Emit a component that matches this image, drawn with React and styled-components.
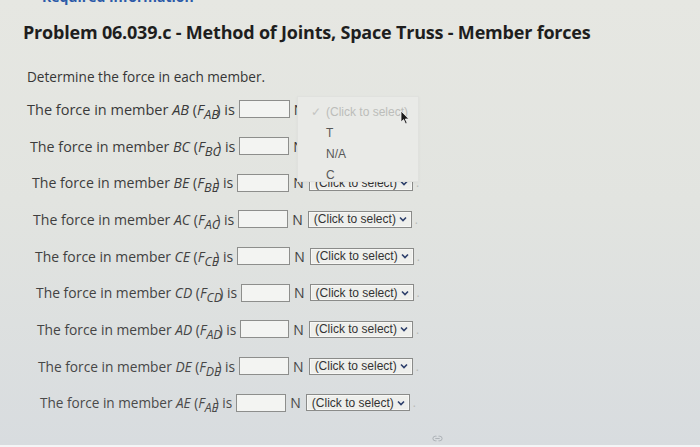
import React from 'react';
import styled, { createGlobalStyle } from 'styled-components';
import { Link2 } from 'lucide-react';

const GlobalStyle = createGlobalStyle`
  html, body { margin: 0; padding: 0; }
  body {
    font-family: "Open Sans", Lato, "Liberation Sans", sans-serif;
    background: #dfe1de;
  }
`

const Page = styled.div`
  position: relative;
  width: 700px;
  height: 445px;
  overflow: hidden;
  border-bottom: 2px solid #f4f5f6;
  background: linear-gradient(180deg, #e6e7e2 0%, #e2e4e0 45%, #d8dcdf 100%);
  display: flex;
  flex-direction: column;
`

const TabStrip = styled.div`
  height: 6px;
  overflow: hidden;
  padding-left: 42px;
`

const TabLabel = styled.div`
  margin-top: -11px;
  line-height: 16px;
  font-size: 14px;
  font-weight: 700;
  color: #2c5aa8;
`

const Title = styled.h1`
  margin: 15px 0 0 23px;
  font-size: 18px;
  line-height: 22px;
  font-weight: 700;
  letter-spacing: -0.2px;
  color: #1e1e1e;
`

const Lead = styled.p`
  margin: 25px 0 0 27px;
  font-size: 13.6px;
  line-height: 18px;
  color: #363636;
`

const RowList = styled.div`
  position: relative;
  margin-top: 5px;
`

const Row = styled.div`
  height: 36.7px;
  display: flex;
  align-items: center;
  padding-left: ${p => p.$indent}px;
  font-size: ${p => p.$size}px;
  color: ${p => p.$color};
  white-space: nowrap;
`

const Label = styled.span`
  i { font-style: italic; }
  sub {
    font-size: 0.9em;
    font-style: italic;
    vertical-align: -4px;
    line-height: 0;
    margin-right: -3px;
  }
`

const NumberBox = styled.div`
  width: ${p => p.$w}px;
  height: 16px;
  margin-left: 4px;
  border: 1px solid #8d8e8c;
  background: #f3f4f2;
`

const Unit = styled.span`
  margin-left: 4px;
  font-size: 14px;
`

const Select = styled.div`
  margin-left: 5px;
  width: 104px;
  height: 17px;
  box-sizing: border-box;
  border: 1px solid #8a8b89;
  box-shadow: inset 0 0 0 1px #f7f7f5;
  background: #eeefec;
  display: flex;
  align-items: center;
  justify-content: space-between;
  padding: 0 4px 0 5px;
  font-family: "Liberation Sans", Arial, sans-serif;
  font-size: 12px;
  color: #333;
`

const Chevron = styled.svg`
  width: 8px;
  height: 6px;
`

const Dot = styled.span`
  margin-left: 3px;
  color: #b9bab7;
  font-size: 12px;
`

const Popup = styled.div`
  position: absolute;
  left: 297px;
  top: 5px;
  width: 122px;
  height: 86px;
  box-sizing: border-box;
  padding-top: 4px;
  background: #e9eae7;
  border: 1px solid #e0e1de;
  box-shadow: 0 1px 3px rgba(0, 0, 0, 0.04);
  font-family: "Liberation Sans", Arial, sans-serif;
  font-size: 12px;
  color: #555;
`

const Option = styled.div`
  height: 21px;
  display: flex;
  align-items: center;
  padding-left: ${p => (p.$checked ? 13 : 28)}px;
  color: ${p => (p.$checked ? '#bcbdba' : '#585958')};
`

const Check = styled.span`
  width: 15px;
  color: #c4c5c2;
`

const Cursor = styled.svg`
  position: absolute;
  left: 400px;
  top: 19px;
  width: 10px;
  height: 15px;
`

const Footer = styled.div`
  margin-top: auto;
  padding: 0 0 1px 432px;
  color: #9aa0a6;
  display: flex;
`

const rows = [
  { m: 'AB', indent: 27, w: 49, color: '#3a3a3a' },
  { m: 'BC', indent: 30, w: 48, color: '#3c3c3c' },
  { m: 'BE', indent: 32, w: 50, color: '#3d3d3d' },
  { m: 'AC', indent: 33, w: 48, color: '#3f3f3f' },
  { m: 'CE', indent: 35, w: 51, color: '#414141' },
  { m: 'CD', indent: 36, w: 47, color: '#434343' },
  { m: 'AD', indent: 37, w: 47, color: '#454545' },
  { m: 'DE', indent: 38, w: 48, color: '#474747' },
  { m: 'AE', indent: 40, w: 48, color: '#4a4a4a' },
]

const App = () => {
  return (
    <>
      <GlobalStyle />
      <Page>
        <TabStrip>
          <TabLabel>Required Information</TabLabel>
        </TabStrip>
        <Title>Problem 06.039.c - Method of Joints, Space Truss - Member forces</Title>
        <Lead>Determine the force in each member.</Lead>
        <RowList>
          {rows.map(r => (
            <Row
              key={r.m}
              $indent={r.indent}
              $size={14.5 - (r.indent - 27) * 0.07}
              $color={r.color}
            >
              <Label>
                The force in member <i>{r.m}</i> (<i>F</i><sub>{r.m}</sub>) is
              </Label>
              <NumberBox $w={r.w} />
              <Unit>N</Unit>
              <Select>
                (Click to select)
                <Chevron viewBox="0 0 8 6">
                  <path d="M1 1.5 L4 4.5 L7 1.5" fill="none" stroke="#2d3f6b" strokeWidth="1.6" />
                </Chevron>
              </Select>
              <Dot>.</Dot>
            </Row>
          ))}
          <Popup>
            <Option $checked>
              <Check>✓</Check>(Click to select)
            </Option>
            <Option>T</Option>
            <Option>N/A</Option>
            <Option>C</Option>
          </Popup>
          <Cursor viewBox="0 0 10 15">
            <path d="M1 1 L1 12 L3.6 9.6 L5.6 14 L7.2 13.3 L5.3 9 L8.8 9 Z" fill="#1a1a1a" stroke="#f2f2f2" strokeWidth="0.8" />
          </Cursor>
        </RowList>
        <Footer>
          <Link2 size={11} strokeWidth={1.5} />
        </Footer>
      </Page>
    </>
  );
};

export default App;
